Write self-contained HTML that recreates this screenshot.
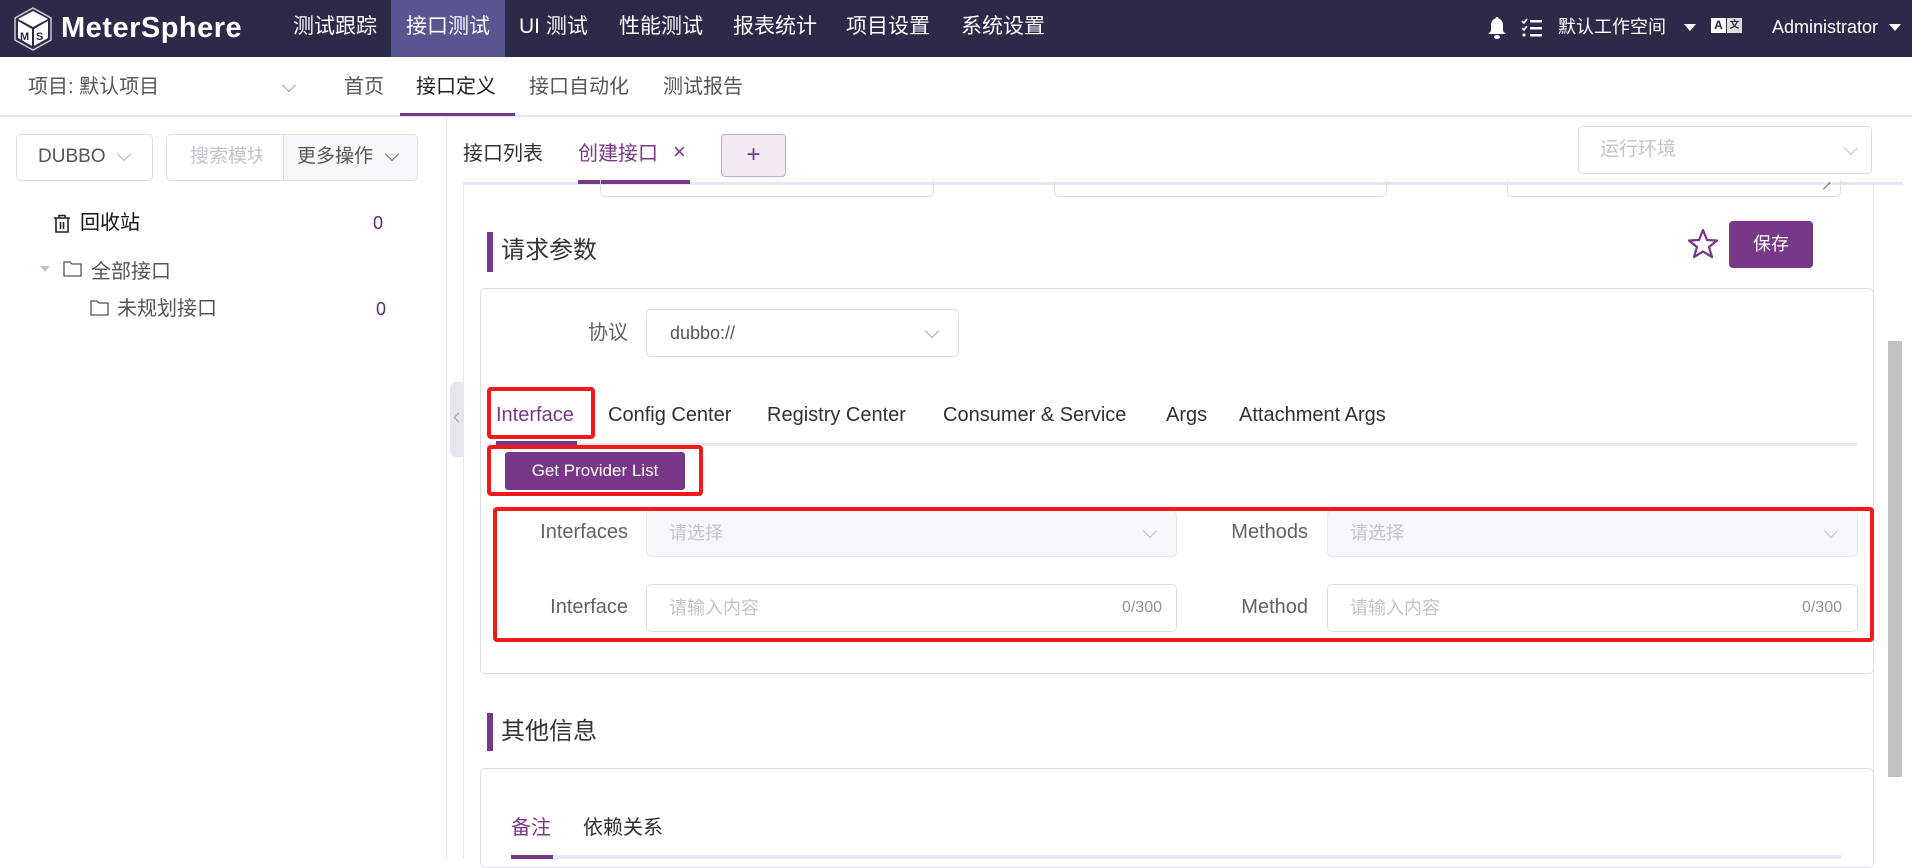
<!DOCTYPE html>
<html><head><meta charset="utf-8"><style>
*{box-sizing:border-box;margin:0;padding:0}
body{width:1912px;height:859px;overflow:hidden;background:#fff;font-family:"Liberation Sans","Noto Sans CJK SC",sans-serif;color:#333;position:relative}
.a{position:absolute;white-space:nowrap}
.hdr{left:0;top:0;width:1912px;height:57px;background:#2d2a49}
.nav{top:0;height:57px;line-height:54px;color:#fff;font-size:21px}
.sub{font-size:20px;color:#555;top:71px;line-height:32px}
.inp{border:1px solid #dcdfe6;border-radius:5px;background:#fff}
.chev{position:absolute;width:10px;height:10px;border-right:1.5px solid #b0b3ba;border-bottom:1.5px solid #b0b3ba;transform:rotate(45deg)}
.red{position:absolute;border:4px solid #f5181b;border-radius:4px}
.tab{top:401px;font-size:20px;color:#303133;line-height:28px}
.lbl{font-size:20px;color:#606266;text-align:right;line-height:28px}
.ph{font-size:18px;color:#c0c4cc;line-height:28px}
</style></head><body>
<div class="a hdr"></div>
<svg class="a" style="left:12px;top:6px" width="42" height="46" viewBox="0 0 42 46"><polygon points="21,2 39,12 39,34 21,44 3,34 3,12" fill="none" stroke="#ccc" stroke-width="1.5"/><polygon points="21,5 36,13 21,21 6,13" fill="#fff"/><polygon points="6,15 20,23 20,40 6,32" fill="#fff"/><polygon points="22,23 36,15 36,32 22,40" fill="#fff"/><text x="8" y="34" font-size="11" font-weight="bold" fill="#2d2a49" font-family="Liberation Sans">M</text><text x="24" y="34" font-size="11" font-weight="bold" fill="#2d2a49" font-family="Liberation Sans">S</text></svg>
<div class="a" style="left:61px;top:8px;font-size:29px;font-weight:bold;color:#fff;line-height:40px;letter-spacing:0.5px">MeterSphere</div>
<div class="a" style="left:391px;top:0;width:114px;height:57px;background:#595591"></div>
<div class="a nav" style="left:293px">测试跟踪</div>
<div class="a nav" style="left:406px">接口测试</div>
<div class="a nav" style="left:519px">UI 测试</div>
<div class="a nav" style="left:619px">性能测试</div>
<div class="a nav" style="left:733px">报表统计</div>
<div class="a nav" style="left:846px">项目设置</div>
<div class="a nav" style="left:961px">系统设置</div>
<svg class="a" style="left:1487px;top:16px" width="20" height="24" viewBox="0 0 20 24"><path d="M10 1c1 0 1.5.7 1.5 1.5C15 3.5 16 6.5 16 10v5l3 3H1l3-3v-5c0-3.5 1-6.5 4.5-7.5C8.5 1.7 9 1 10 1z" fill="#fff"/><ellipse cx="10" cy="21" rx="3" ry="2" fill="#fff"/></svg>
<svg class="a" style="left:1521px;top:18px" width="22" height="20" viewBox="0 0 22 20"><path d="M1 3l2 2 3-4M1 10l2 2 3-4" stroke="#fff" stroke-width="1.6" fill="none"/><circle cx="3" cy="17" r="1.6" fill="#fff"/><rect x="9" y="2" width="12" height="2.5" fill="#fff"/><rect x="9" y="9" width="12" height="2.5" fill="#fff"/><rect x="9" y="16" width="12" height="2.5" fill="#fff"/></svg>
<div class="a" style="left:1558px;top:12px;font-size:18px;color:#fff;line-height:30px">默认工作空间</div>
<div class="a" style="left:1684px;top:24px;border-left:6px solid transparent;border-right:6px solid transparent;border-top:7px solid #fff"></div>
<div class="a" style="left:1711px;top:18px;width:15px;height:15px;background:#fff;color:#2d2a49;font-size:12px;font-weight:bold;text-align:center;line-height:15px">A</div>
<div class="a" style="left:1727px;top:18px;width:15px;height:15px;background:#ddd;color:#2d2a49;font-size:10px;font-weight:bold;text-align:center;line-height:15px">文</div>
<div class="a" style="left:1772px;top:12px;font-size:18px;color:#fff;line-height:30px">Administrator</div>
<div class="a" style="left:1889px;top:24px;border-left:6px solid transparent;border-right:6px solid transparent;border-top:7px solid #fff"></div>

<div class="a sub" style="left:28px">项目: 默认项目</div>
<div class="chev" style="left:284px;top:80px;border-color:#a0a3aa"></div>
<div class="a sub" style="left:344px">首页</div>
<div class="a sub" style="left:416px;color:#222">接口定义</div>
<div class="a sub" style="left:529px">接口自动化</div>
<div class="a sub" style="left:663px">测试报告</div>
<div class="a" style="left:0;top:115px;width:1912px;height:2px;background:#e6e6e6"></div>
<div class="a" style="left:400px;top:113px;width:115px;height:3px;background:#783887"></div>

<div class="a" style="left:446px;top:117px;width:1px;height:742px;background:#e6e6e6"></div>
<div class="a inp" style="left:16px;top:134px;width:137px;height:47px"></div>
<div class="a" style="left:38px;top:143px;font-size:19px;color:#555;line-height:28px">DUBBO</div>
<div class="chev" style="left:119px;top:149px"></div>
<div class="a inp" style="left:166px;top:134px;width:252px;height:47px"></div>
<div class="a" style="left:283px;top:135px;width:134px;height:45px;background:#f5f7fa;border-left:1px solid #dcdfe6;border-radius:0 5px 5px 0"></div>
<div class="a ph" style="left:190px;top:143px;width:72px;overflow:hidden;font-size:19px">搜索模块</div>
<div class="a" style="left:297px;top:143px;font-size:19px;color:#555;line-height:28px">更多操作</div>
<div class="chev" style="left:387px;top:149px;border-color:#666"></div>

<svg class="a" style="left:53px;top:214px" width="18" height="19" viewBox="0 0 18 19"><path d="M1 4h16M6 4V1.5h6V4M3 4v14h12V4M7.5 8v7M10.5 8v7" stroke="#222" stroke-width="1.6" fill="none"/></svg>
<div class="a" style="left:80px;top:209px;font-size:20px;color:#111;line-height:28px">回收站</div>
<div class="a" style="left:373px;top:209px;font-size:18px;color:#5d2b6a;line-height:28px">0</div>
<div class="a" style="left:40px;top:266px;border-left:5px solid transparent;border-right:5px solid transparent;border-top:6px solid #c0c4cc"></div>
<svg class="a" style="left:63px;top:261px" width="19" height="16" viewBox="0 0 19 16"><path d="M1 1h6l2 2h9v12H1z" stroke="#555" stroke-width="1.3" fill="none"/></svg>
<div class="a" style="left:91px;top:258px;font-size:20px;color:#555;line-height:28px">全部接口</div>
<svg class="a" style="left:90px;top:300px" width="19" height="16" viewBox="0 0 19 16"><path d="M1 1h6l2 2h9v12H1z" stroke="#555" stroke-width="1.3" fill="none"/></svg>
<div class="a" style="left:117px;top:295px;font-size:20px;color:#555;line-height:28px">未规划接口</div>
<div class="a" style="left:376px;top:295px;font-size:18px;color:#5d2b6a;line-height:28px">0</div>

<div class="a" style="left:450px;top:382px;width:13px;height:75px;background:#e4e7ed;border-radius:6px 0 0 6px"></div>
<div class="a" style="left:455px;top:414px;width:7px;height:7px;border-left:1px solid #999;border-bottom:1px solid #999;transform:rotate(45deg)"></div>

<div class="a" style="left:463px;top:140px;font-size:20px;color:#303133;line-height:28px">接口列表</div>
<div class="a" style="left:578px;top:140px;font-size:20px;color:#783887;line-height:28px">创建接口</div>
<div class="a" style="left:673px;top:138px;font-size:22px;color:#783887;line-height:28px;font-weight:300">×</div>
<div class="a" style="left:721px;top:134px;width:65px;height:43px;background:#f2e9f3;border:1px solid #c9a6cf;border-radius:4px;text-align:center;line-height:40px;font-size:24px;color:#783887;font-weight:300">+</div>
<div class="a inp" style="left:1578px;top:126px;width:294px;height:48px"></div>
<div class="a ph" style="left:1600px;top:136px;font-size:19px">运行环境</div>
<div class="chev" style="left:1846px;top:143px;border-color:#c0c4cc"></div>
<div class="a" style="left:463px;top:182px;width:1440px;height:3px;background:#e4e7ed"></div>
<div class="a" style="left:578px;top:180px;width:112px;height:4px;background:#783887"></div>
<div class="a" style="left:463px;top:185px;width:1px;height:674px;background:#e4e7ed"></div>
<div class="a" style="left:1873px;top:185px;width:1px;height:674px;background:#eee"></div>
<div class="a" style="left:600px;top:180px;width:334px;height:17px;border:1px solid #dcdfe6;border-top:none;border-radius:0 0 5px 5px"></div>
<div class="a" style="left:1054px;top:180px;width:333px;height:17px;border:1px solid #dcdfe6;border-top:none;border-radius:0 0 5px 5px"></div>
<div class="a" style="left:1507px;top:180px;width:334px;height:17px;border:1px solid #dcdfe6;border-top:none;border-radius:0 0 5px 5px"></div>
<div class="a" style="left:1825px;top:184px;width:10px;height:10px;border-top:1px solid #666;transform:rotate(-45deg)"></div>

<div class="a" style="left:487px;top:232px;width:6px;height:40px;background:#783887"></div>
<div class="a" style="left:501px;top:236px;font-size:24px;color:#333;line-height:30px">请求参数</div>
<svg class="a" style="left:1686px;top:227px" width="34" height="34" viewBox="0 0 34 34"><polygon points="17,3 21,13 31,13.5 23,20 26,30 17,24.5 8,30 11,20 3,13.5 13,13" fill="none" stroke="#783887" stroke-width="2.2" stroke-linejoin="round"/></svg>
<div class="a" style="left:1729px;top:221px;width:84px;height:47px;background:#783887;border-radius:4px;color:#fff;font-size:18px;text-align:center;line-height:47px">保存</div>

<div class="a" style="left:480px;top:288px;width:1394px;height:386px;border:1px solid #dcdfe6;border-radius:5px"></div>
<div class="a lbl" style="left:580px;top:319px;width:48px">协议</div>
<div class="a inp" style="left:646px;top:309px;width:313px;height:48px"></div>
<div class="a" style="left:670px;top:319px;font-size:18px;color:#555;line-height:28px">dubbo://</div>
<div class="chev" style="left:927px;top:326px;border-color:#aaa"></div>

<div class="a tab" style="left:496px;color:#783887">Interface</div>
<div class="a tab" style="left:608px">Config Center</div>
<div class="a tab" style="left:767px">Registry Center</div>
<div class="a tab" style="left:943px">Consumer &amp; Service</div>
<div class="a tab" style="left:1166px">Args</div>
<div class="a tab" style="left:1239px">Attachment Args</div>
<div class="a" style="left:487px;top:443px;width:1370px;height:3px;background:#e4e7ed"></div>
<div class="a" style="left:496px;top:441px;width:81px;height:5px;background:#783887"></div>
<div class="a" style="left:505px;top:452px;width:180px;height:38px;background:#783887;border-radius:3px;color:#fff;font-size:17px;text-align:center;line-height:38px">Get Provider List</div>

<div class="a lbl" style="left:520px;top:518px;width:108px">Interfaces</div>
<div class="a inp" style="left:646px;top:510px;width:531px;height:47px;background:#f5f7fa;border-color:#e4e7ed"></div>
<div class="a ph" style="left:669px;top:519px">请选择</div>
<div class="chev" style="left:1145px;top:526px;border-color:#c0c4cc"></div>
<div class="a lbl" style="left:1200px;top:518px;width:108px">Methods</div>
<div class="a inp" style="left:1327px;top:510px;width:531px;height:47px;background:#f5f7fa;border-color:#e4e7ed"></div>
<div class="a ph" style="left:1350px;top:519px">请选择</div>
<div class="chev" style="left:1826px;top:526px;border-color:#c0c4cc"></div>
<div class="a lbl" style="left:520px;top:593px;width:108px">Interface</div>
<div class="a inp" style="left:646px;top:584px;width:531px;height:48px"></div>
<div class="a ph" style="left:669px;top:594px">请输入内容</div>
<div class="a" style="left:1100px;top:594px;width:62px;text-align:right;font-size:16px;color:#909399;line-height:28px">0/300</div>
<div class="a lbl" style="left:1200px;top:593px;width:108px">Method</div>
<div class="a inp" style="left:1327px;top:584px;width:531px;height:48px"></div>
<div class="a ph" style="left:1350px;top:594px">请输入内容</div>
<div class="a" style="left:1780px;top:594px;width:62px;text-align:right;font-size:16px;color:#909399;line-height:28px">0/300</div>

<div class="red" style="left:487px;top:387px;width:108px;height:52px"></div>
<div class="red" style="left:487px;top:445px;width:216px;height:51px"></div>
<div class="red" style="left:493px;top:507px;width:1381px;height:135px"></div>

<div class="a" style="left:487px;top:713px;width:6px;height:38px;background:#783887"></div>
<div class="a" style="left:501px;top:717px;font-size:24px;color:#333;line-height:30px">其他信息</div>
<div class="a" style="left:480px;top:768px;width:1394px;height:100px;border:1px solid #dcdfe6;border-radius:5px"></div>
<div class="a" style="left:511px;top:814px;font-size:20px;color:#783887;line-height:28px">备注</div>
<div class="a" style="left:583px;top:814px;font-size:20px;color:#303133;line-height:28px">依赖关系</div>
<div class="a" style="left:511px;top:855px;width:1330px;height:4px;background:#e4e7ed"></div>
<div class="a" style="left:511px;top:855px;width:42px;height:4px;background:#783887"></div>

<div class="a" style="left:1888px;top:341px;width:14px;height:436px;background:#c1c1c1"></div>
</body></html>
